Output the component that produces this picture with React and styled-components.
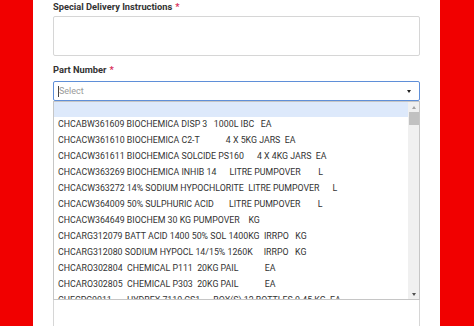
import styled, { createGlobalStyle } from "styled-components";

const GlobalStyle = createGlobalStyle`
  html, body {
    margin: 0;
    padding: 0;
  }
  body {
    background: #f10000;
    font-family: Roboto, "Noto Sans", sans-serif;
    overflow: hidden;
  }
`;

const Page = styled.div`
  padding-left: 33px;
  height: 326px;
`;

const Panel = styled.div`
  width: 407px;
  height: 100%;
  background: #fff;
  padding: 0 20px;
  box-sizing: border-box;
`;

const Label = styled.div`
  font-size: 9.3px;
  font-weight: 700;
  color: #333;
  line-height: 14px;
  margin-top: ${(p) => p.$top || 0}px;
`;

const Required = styled.span`
  color: #d8315b;
  margin-left: 3px;
`;

const TextArea = styled.div`
  margin-top: 2px;
  height: 40px;
  border: 1px solid #d6d6d6;
  border-radius: 2px;
  box-sizing: border-box;
`;

const SelectWrap = styled.div`
  position: relative;
  margin-top: 4px;
`;

const SelectBox = styled.div`
  height: 20px;
  box-sizing: border-box;
  border: 1px solid #5f8fd8;
  border-radius: 2px;
  display: flex;
  align-items: center;
  padding: 0 8px 0 4px;
`;

const Cursor = styled.span`
  width: 1px;
  height: 11px;
  background: #444;
`;

const Placeholder = styled.span`
  flex: 1;
  font-size: 9px;
  color: #9a9a9a;
`;

const Arrow = styled.span`
  width: 0;
  height: 0;
  border-left: 2.5px solid transparent;
  border-right: 2.5px solid transparent;
  border-top: 3px solid ${(p) => p.$color || "#222"};
`;

const UpArrow = styled.span`
  width: 0;
  height: 0;
  border-left: 2.5px solid transparent;
  border-right: 2.5px solid transparent;
  border-bottom: 3px solid #a3a3a3;
`;

const Dropdown = styled.div`
  position: absolute;
  top: 20px;
  left: 0;
  right: 0;
  height: 199px;
  border: 1px solid #c6c6c6;
  background: #fff;
  display: flex;
  box-sizing: border-box;
  z-index: 2;
`;

const List = styled.div`
  flex: 1;
  overflow: hidden;
`;

const Blank = styled.div`
  height: 15px;
  background: #dde9fb;
`;

const Option = styled.div`
  height: 16px;
  line-height: 14px;
  padding-left: 4px;
  font-size: 8.8px;
  color: #333;
  white-space: pre;
`;

const Scrollbar = styled.div`
  width: 11px;
  background: #f0f0f0;
  display: flex;
  flex-direction: column;
  align-items: center;
`;

const ScrollButton = styled.div`
  height: 10px;
  width: 100%;
  display: flex;
  align-items: center;
  justify-content: center;
`;

const Thumb = styled.div`
  width: 10px;
  height: 13px;
  background: #c1c1c1;
`;

const Track = styled.div`
  flex: 1;
`;

const NextBox = styled.div`
  margin-top: 12px;
  height: 260px;
  border: 1px solid #d6d6d6;
  border-radius: 2px;
  box-sizing: border-box;
`;

const sp = (n) => " ".repeat(n);

const options = [
  `CHCABW361609 BIOCHEMICA DISP 3${sp(3)}1000L IBC${sp(3)}EA`,
  `CHCACW361610 BIOCHEMICA C2-T${sp(12)}4 X 5KG JARS${sp(2)}EA`,
  `CHCACW361611 BIOCHEMICA SOLCIDE PS160${sp(6)}4 X 4KG JARS${sp(2)}EA`,
  `CHCACW363269 BIOCHEMICA INHIB 14${sp(6)}LITRE PUMPOVER${sp(8)}L`,
  `CHCACW363272 14% SODIUM HYPOCHLORITE${sp(2)}LITRE PUMPOVER${sp(6)}L`,
  `CHCACW364009 50% SULPHURIC ACID${sp(7)}LITRE PUMPOVER${sp(8)}L`,
  `CHCACW364649 BIOCHEM 30 KG PUMPOVER${sp(4)}KG`,
  `CHCARG312079 BATT ACID 1400 50% SOL 1400KG${sp(2)}IRRPO${sp(3)}KG`,
  `CHCARG312080 SODIUM HYPOCL 14/15% 1260K${sp(5)}IRRPO${sp(3)}KG`,
  `CHCARO302804  CHEMICAL P111  20KG PAIL${sp(12)}EA`,
  `CHCARO302805  CHEMICAL P303  20KG PAIL${sp(12)}EA`,
  `CHECPC0011${sp(7)}HYDREX 7110 CS1${sp(6)}BOX(S) 12 BOTTLES 0.45 KG${sp(2)}EA`,
];

export default function App() {
  return (
    <Page>
      <GlobalStyle />
      <Panel>
        <Label>
          Special Delivery Instructions<Required>*</Required>
        </Label>
        <TextArea />
        <Label $top={7}>
          Part Number<Required>*</Required>
        </Label>
        <SelectWrap>
          <SelectBox>
            <Cursor />
            <Placeholder>Select</Placeholder>
            <Arrow />
          </SelectBox>
          <Dropdown>
            <List>
              <Blank />
              {options.map((o) => (
                <Option key={o}>{o}</Option>
              ))}
            </List>
            <Scrollbar>
              <ScrollButton>
                <UpArrow />
              </ScrollButton>
              <Thumb />
              <Track />
              <ScrollButton>
                <Arrow $color="#505050" />
              </ScrollButton>
            </Scrollbar>
          </Dropdown>
        </SelectWrap>
        <NextBox />
      </Panel>
    </Page>
  );
}
